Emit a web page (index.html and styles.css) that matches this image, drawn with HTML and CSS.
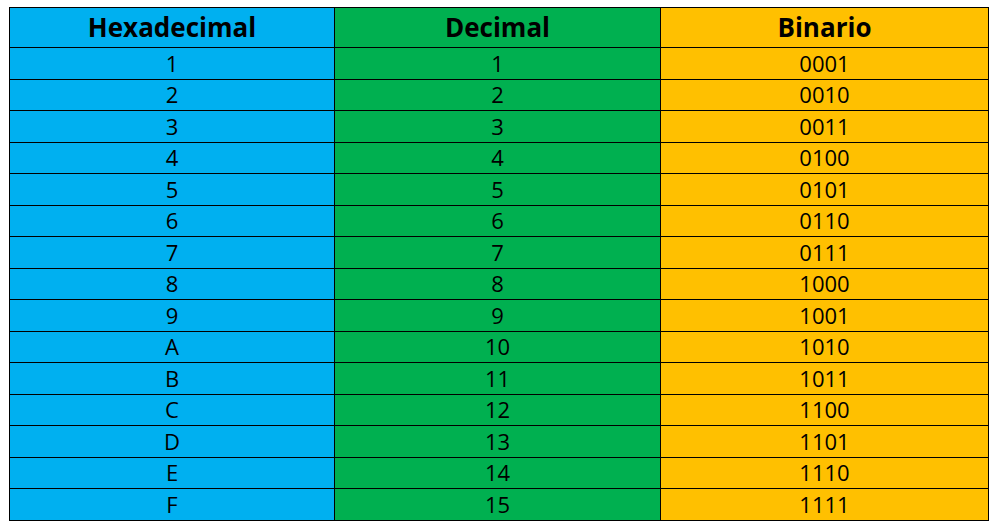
FILE: index.html
```html
<!DOCTYPE html>
<html>
<head>
<meta charset="utf-8">
<link rel="stylesheet" href="styles.css">
</head>
<body>
<table class="conv">
  <thead>
    <tr class="head">
      <th class="hex">Hexadecimal</th>
      <th class="dec">Decimal</th>
      <th class="bin">Binario</th>
    </tr>
  </thead>
  <tbody>
    <tr><td class="hex">1</td><td class="dec">1</td><td class="bin">0001</td></tr>
    <tr><td class="hex">2</td><td class="dec">2</td><td class="bin">0010</td></tr>
    <tr><td class="hex">3</td><td class="dec">3</td><td class="bin">0011</td></tr>
    <tr><td class="hex">4</td><td class="dec">4</td><td class="bin">0100</td></tr>
    <tr><td class="hex">5</td><td class="dec">5</td><td class="bin">0101</td></tr>
    <tr><td class="hex">6</td><td class="dec">6</td><td class="bin">0110</td></tr>
    <tr><td class="hex">7</td><td class="dec">7</td><td class="bin">0111</td></tr>
    <tr><td class="hex">8</td><td class="dec">8</td><td class="bin">1000</td></tr>
    <tr><td class="hex">9</td><td class="dec">9</td><td class="bin">1001</td></tr>
    <tr><td class="hex">A</td><td class="dec">10</td><td class="bin">1010</td></tr>
    <tr><td class="hex">B</td><td class="dec">11</td><td class="bin">1011</td></tr>
    <tr><td class="hex">C</td><td class="dec">12</td><td class="bin">1100</td></tr>
    <tr><td class="hex">D</td><td class="dec">13</td><td class="bin">1101</td></tr>
    <tr><td class="hex">E</td><td class="dec">14</td><td class="bin">1110</td></tr>
    <tr><td class="hex">F</td><td class="dec">15</td><td class="bin">1111</td></tr>
  </tbody>
</table>
</body>
</html>
```

FILE: styles.css
```css
html, body {
  margin: 0;
  padding: 0;
  background: #ffffff;
}
body {
  padding: 7px 0 0 9px;
  font-family: "Open Sans", "Liberation Sans", sans-serif;
  color: #000;
}
.conv {
  border-collapse: collapse;
  table-layout: fixed;
  width: 980px;
  border: 1px solid #000;
}
.conv th, .conv td {
  border: 1px solid #000;
  padding: 0;
  text-align: center;
  vertical-align: middle;
  line-height: 1;
}
.conv th {
  height: 40px;
  font-size: 26px;
  font-weight: 700;
  padding-bottom: 1px;
  box-sizing: border-box;
}
.conv td {
  font-size: 22px;
  padding-bottom: 2px;
}
.conv tbody tr:nth-child(odd) td { height: 29px; }
.conv tbody tr:nth-child(even) td { height: 28px; }
.hex { background: #00b0f0; width: 325px; }
.dec { background: #00b050; width: 326px; }
.bin { background: #ffc000; }
```
